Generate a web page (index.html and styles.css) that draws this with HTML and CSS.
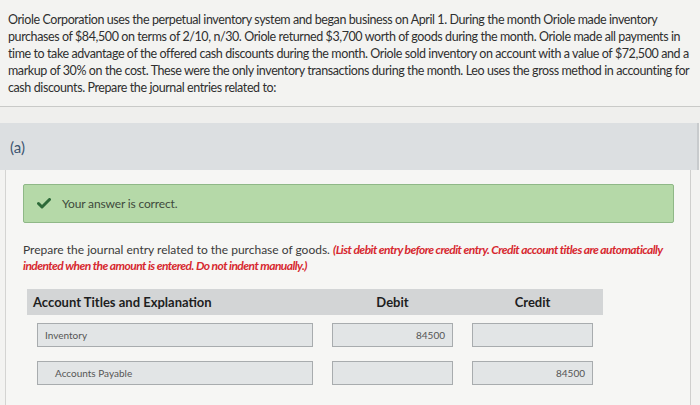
FILE: index.html
```html
<!DOCTYPE html>
<html>
<head>
<meta charset="utf-8">
<link rel="stylesheet" href="styles.css">
</head>
<body>
<div class="question">Oriole Corporation uses the perpetual inventory system and began business on April 1. During the month Oriole made inventory<br>purchases of $84,500 on terms of 2/10, n/30. Oriole returned $3,700 worth of goods during the month. Oriole made all payments in<br>time to take advantage of the offered cash discounts during the month. Oriole sold inventory on account with a value of $72,500 and a<br>markup of 30% on the cost. These were the only inventory transactions during the month. Leo uses the gross method in accounting for<br>cash discounts. Prepare the journal entries related to:</div>
<div class="rule"></div>
<div class="part-band"><span class="part-label">(a)</span></div>
<div class="panel">
  <div class="correct">
    <svg class="check" width="14" height="11" viewBox="0 0 14 11"><polyline points="1.5,5.5 5,9 12.5,1.5" fill="none" stroke="#2d6a39" stroke-width="3" stroke-linecap="round" stroke-linejoin="round"/></svg>
    <span class="correct-text">Your answer is correct.</span>
  </div>
  <p class="instructions">Prepare the journal entry related to the purchase of goods. <em class="note">(List debit entry before credit entry. Credit account titles are automatically<br>indented when the amount is entered. Do not indent manually.)</em></p>
  <div class="journal">
    <div class="jhead">
      <div class="h-account">Account Titles and Explanation</div>
      <div class="h-num">Debit</div>
      <div class="h-num">Credit</div>
    </div>
    <div class="jrow">
      <div class="field">Inventory</div>
      <div class="field num">84500</div>
      <div class="field num"></div>
    </div>
    <div class="jrow">
      <div class="field indent">Accounts Payable</div>
      <div class="field num"></div>
      <div class="field num">84500</div>
    </div>
  </div>
</div>
</body>
</html>
```
FILE: styles.css
```css
html, body {
  margin: 0;
  padding: 0;
  background: #f3f3f1;
  font-family: Lato, "Open Sans", sans-serif;
  color: #2f2f2f;
}
body {
  width: 700px;
  height: 405px;
  overflow: hidden;
}
.question {
  padding: 11px 8px 0 8px;
  font-size: 12.5px;
  letter-spacing: -0.41px;
  line-height: 17px;
  height: 85px;
  white-space: nowrap;
}
.rule {
  margin-top: 10px;
  border-top: 1px solid #c9cac8;
  height: 16px;
  background: #efefed;
}
.part-band {
  height: 47px;
  background: #dcdfe1;
  border-right: 2px solid #c8cbcd;
  display: flex;
  align-items: center;
  padding-left: 10px;
  box-sizing: border-box;
  width: 699px;
}
.part-label {
  font-size: 15px;
  color: #3d5570;
  margin-top: 1px;
}
.panel {
  margin-left: 5px;
  width: 686px;
  border-left: 1px solid #d4d4d2;
  border-right: 1px solid #cfcfcd;
  background: #f6f6f4;
  padding: 14px 16px 30px 17px;
  box-sizing: border-box;
  height: 240px;
}
.correct {
  height: 39px;
  box-sizing: border-box;
  background: #b5d9a8;
  border: 1px solid #8fb887;
  border-radius: 2px;
  display: flex;
  align-items: center;
  padding-left: 13px;
}
.check {
  display: block;
}
.correct-text {
  margin-left: 11px;
  font-size: 12px;
  letter-spacing: -0.15px;
  color: #3e4a3c;
}
.instructions {
  margin: 19px 0 0 0;
  font-size: 12px;
  line-height: 16px;
  color: #3a3a3a;
  white-space: nowrap;
}
.note {
  color: #d7282f;
  font-weight: bold;
  font-style: italic;
  letter-spacing: -0.56px;
}
.journal {
  margin: 15px 0 0 4px;
  width: 576px;
}
.jhead, .jrow {
  display: grid;
  grid-template-columns: 276px 121px 121px;
  column-gap: 19px;
  padding: 0 10px;
}
.jhead {
  background: #d3d5d6;
  height: 26px;
  align-items: center;
  font-weight: bold;
  font-size: 13px;
  color: #1e1e1e;
}
.h-account {
  margin-left: -4px;
}
.h-num {
  text-align: center;
}
.jrow {
  margin-top: 8px;
}
.jrow + .jrow {
  margin-top: 14px;
}
.field {
  height: 24px;
  box-sizing: border-box;
  border: 1px solid #a8acae;
  background: #e2e5e6;
  font-size: 10px;
  color: #555;
  display: flex;
  align-items: center;
  padding: 0 7px;
}
.field.indent {
  padding-left: 17px;
}
.field.num {
  justify-content: flex-end;
}
```
